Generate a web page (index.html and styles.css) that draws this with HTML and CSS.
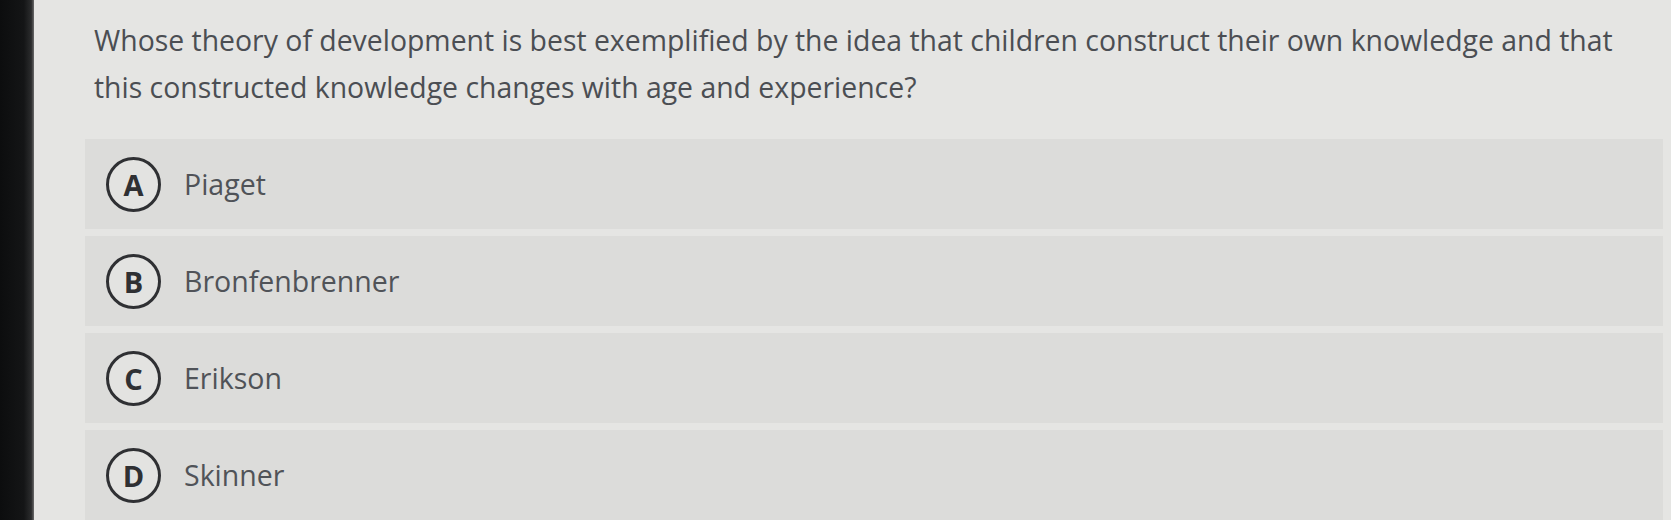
FILE: index.html
```html
<!DOCTYPE html>
<html lang="en">
<head>
<meta charset="utf-8">
<title>Question</title>
<link rel="stylesheet" href="styles.css">
</head>
<body>
<div class="screen">
  <div class="bezel"></div>
  <main class="content">
    <p class="question">Whose theory of development is best exemplified by the idea that children construct their own knowledge and that this constructed knowledge changes with age and experience?</p>
    <ul class="options">
      <li class="option"><span class="letter">A</span><span class="label">Piaget</span></li>
      <li class="option"><span class="letter">B</span><span class="label">Bronfenbrenner</span></li>
      <li class="option"><span class="letter">C</span><span class="label">Erikson</span></li>
      <li class="option"><span class="letter">D</span><span class="label">Skinner</span></li>
    </ul>
  </main>
</div>
</body>
</html>
```

FILE: styles.css
```css
html, body {
  margin: 0;
  padding: 0;
  height: 100%;
}
body {
  background: #e5e5e3;
  font-family: "Open Sans", "Liberation Sans", sans-serif;
  overflow: hidden;
}
.screen {
  display: flex;
  height: 520px;
  width: 1671px;
}
.bezel {
  flex: 0 0 34px;
  background: linear-gradient(to right, #0c0d0e 0%, #141516 70%, #2b2c2d 92%, #6a6a6a 100%);
}
.content {
  flex: 1;
  padding: 17px 8px 0 51px;
  box-sizing: border-box;
  min-width: 0;
}
.question {
  margin: 0 0 28px 0;
  padding-left: 9px;
  max-width: 1545px;
  font-size: 28.4px;
  line-height: 47px;
  color: #4b4e53;
}
.options {
  list-style: none;
  margin: 0;
  padding: 0;
  display: flex;
  flex-direction: column;
  gap: 7px;
}
.option {
  display: flex;
  align-items: center;
  height: 90px;
  background: #dcdcda;
  padding-left: 21px;
  gap: 23px;
}
.letter {
  box-sizing: border-box;
  width: 55px;
  height: 55px;
  border: 3px solid #2f3033;
  border-radius: 50%;
  background: #e3e3e1;
  display: flex;
  align-items: center;
  justify-content: center;
  font-weight: 700;
  font-size: 29px;
  color: #2f3033;
  line-height: 1;
}
.label {
  font-size: 28.5px;
  color: #505358;
  line-height: 1;
}
```
